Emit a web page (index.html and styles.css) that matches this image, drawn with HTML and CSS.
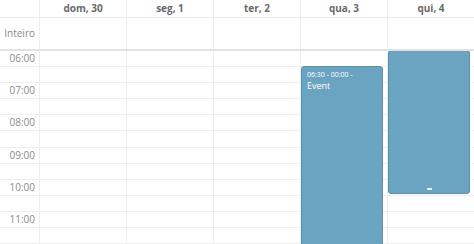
FILE: index.html
```html
<!DOCTYPE html>
<html lang="pt">
<head>
  <meta charset="UTF-8">
  <title>Semana</title>
  <link rel="stylesheet" href="styles.css">
</head>
<body>
  <div class="cal">
    <!-- cabecalho dos dias -->
    <div class="row head">
      <div class="axis"></div>
      <div class="day">dom, 30</div>
      <div class="day">seg, 1</div>
      <div class="day">ter, 2</div>
      <div class="day">qua, 3</div>
      <div class="day">qui, 4</div>
    </div>
    <!-- dia inteiro -->
    <div class="row allday">
      <div class="axis">Inteiro</div>
      <div class="day"></div>
      <div class="day"></div>
      <div class="day"></div>
      <div class="day"></div>
      <div class="day"></div>
    </div>
    <div class="body">
      <div class="slots">
        <div class="row slot"><div class="axis">06:00</div><div class="day"></div><div class="day"></div><div class="day"></div><div class="day"></div><div class="day"></div></div>
        <div class="row slot"><div class="axis"></div><div class="day"></div><div class="day"></div><div class="day"></div><div class="day"></div><div class="day"></div></div>
        <div class="row slot"><div class="axis">07:00</div><div class="day"></div><div class="day"></div><div class="day"></div><div class="day"></div><div class="day"></div></div>
        <div class="row slot"><div class="axis"></div><div class="day"></div><div class="day"></div><div class="day"></div><div class="day"></div><div class="day"></div></div>
        <div class="row slot"><div class="axis">08:00</div><div class="day"></div><div class="day"></div><div class="day"></div><div class="day"></div><div class="day"></div></div>
        <div class="row slot"><div class="axis"></div><div class="day"></div><div class="day"></div><div class="day"></div><div class="day"></div><div class="day"></div></div>
        <div class="row slot"><div class="axis">09:00</div><div class="day"></div><div class="day"></div><div class="day"></div><div class="day"></div><div class="day"></div></div>
        <div class="row slot"><div class="axis"></div><div class="day"></div><div class="day"></div><div class="day"></div><div class="day"></div><div class="day"></div></div>
        <div class="row slot"><div class="axis">10:00</div><div class="day"></div><div class="day"></div><div class="day"></div><div class="day"></div><div class="day"></div></div>
        <div class="row slot"><div class="axis"></div><div class="day"></div><div class="day"></div><div class="day"></div><div class="day"></div><div class="day"></div></div>
        <div class="row slot"><div class="axis">11:00</div><div class="day"></div><div class="day"></div><div class="day"></div><div class="day"></div><div class="day"></div></div>
        <div class="row slot"><div class="axis"></div><div class="day"></div><div class="day"></div><div class="day"></div><div class="day"></div><div class="day"></div></div>
      </div>
      <!-- eventos por cima da grade -->
      <div class="row events">
        <div class="axis"></div>
        <div class="col"></div>
        <div class="col"></div>
        <div class="col"></div>
        <div class="col">
          <div class="event" style="top:15px;height:260px;">
            <div class="ev-time">06:30 - 00:00 -</div>
            <div class="ev-title">Event</div>
          </div>
        </div>
        <div class="col">
          <div class="event" style="top:-1px;height:144px;">
            <div class="resizer"></div>
          </div>
        </div>
      </div>
    </div>
  </div>
</body>
</html>
```

FILE: styles.css
```css
*{margin:0;padding:0;box-sizing:border-box;}
body{font-family:"Open Sans","Liberation Sans",sans-serif;background:#fff;overflow:hidden;}
.cal{width:474px;}
.row{display:grid;grid-template-columns:39px repeat(5,1fr);}
.row .day{border-left:1px solid #eeeeee;}

/* cabecalho */
.head{height:18px;border-bottom:1px solid #e9e9e9;}
.head .day{font-size:10px;font-weight:bold;color:#6a6a6a;text-align:center;line-height:17px;}

/* dia inteiro */
.allday{height:33px;border-bottom:2px solid #e2e2e2;}
.axis{font-size:10px;color:#8a8a8a;text-align:right;padding-right:4px;}
.allday .axis{line-height:30px;}

/* horas */
.body{position:relative;overflow:hidden;height:193px;}
.slot{height:16.1px;border-bottom:1px solid #efefef;}
.slot .axis{line-height:15px;}

.events{position:absolute;left:0;top:0;right:0;bottom:0;}
.events .col{position:relative;}
.event{position:absolute;left:1px;right:4px;background:#6aa4c1;border:1px solid #5b91ad;border-radius:3px;color:#fff;padding:3px 5px;}
.ev-time{font-size:7px;line-height:10px;}
.ev-title{font-size:9px;line-height:12px;}
.resizer{position:absolute;left:50%;bottom:3px;width:5px;height:2px;margin-left:-2px;background:#e8f0f5;}
```
